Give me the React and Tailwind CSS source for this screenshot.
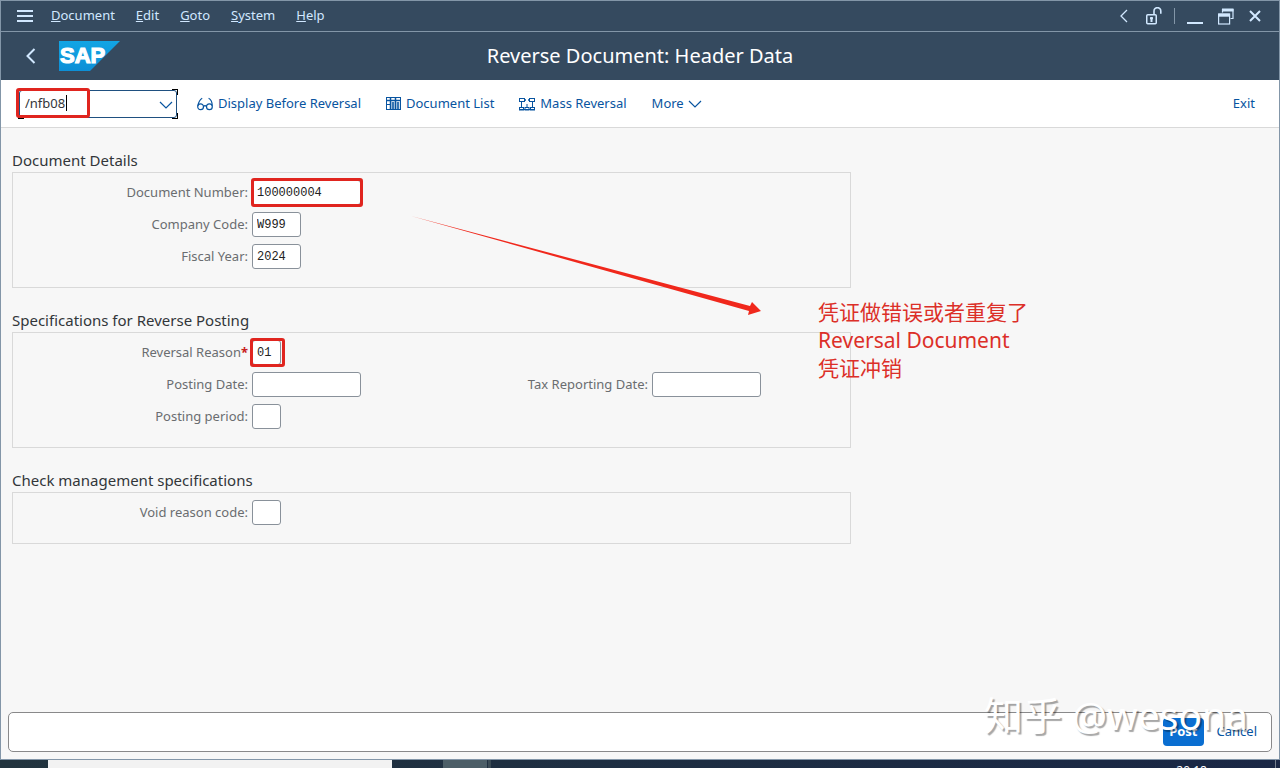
import { useState } from 'react';

const MENU_ITEMS = ['Document', 'Edit', 'Goto', 'System', 'Help'];

const MONO = "font-['Liberation_Mono',monospace]";

function SapLogo() {
  return (
    <svg width="62" height="30" viewBox="0 0 62 30" role="img" aria-label="SAP">
      <defs>
        <linearGradient id="sap-blue" x1="0" y1="0" x2="0" y2="1">
          <stop offset="0" stopColor="#12a5e4" />
          <stop offset="1" stopColor="#0d8fd6" />
        </linearGradient>
      </defs>
      <polygon points="0,0 61,0 31,30 0,30" fill="url(#sap-blue)" />
      <text
        x="1"
        y="22"
        fill="#fff"
        stroke="#fff"
        strokeWidth="1.200"
        fontFamily="Liberation Sans, sans-serif"
        fontWeight="700"
        fontSize="22"
      >
        SAP
      </text>
    </svg>
  );
}

function MenuIcon() {
  return (
    <svg width="16" height="14" viewBox="0 0 16 14" fill="#d1e8ff" aria-hidden="true">
      <rect y="1" width="16" height="2" />
      <rect y="6" width="16" height="2" />
      <rect y="11" width="16" height="2" />
    </svg>
  );
}

function CollapseIcon() {
  return (
    <svg width="8" height="14" viewBox="0 0 8 14" fill="none" stroke="#d1e8ff" strokeWidth="1.300" aria-hidden="true">
      <path d="M7 1L1 7l6 6" />
    </svg>
  );
}

function BackIcon() {
  return (
    <svg width="10" height="16" viewBox="0 0 10 16" fill="none" stroke="#d1e8ff" strokeWidth="2" aria-hidden="true">
      <path d="M8.500 1L1.500 8l7 7" />
    </svg>
  );
}

function UnlockIcon() {
  return (
    <svg width="16" height="18" viewBox="0 0 16 18" fill="none" stroke="#d1e8ff" aria-hidden="true">
      <rect x="0.75" y="7.75" width="9.5" height="9" rx="1" strokeWidth="1.5" />
      <path d="M8 7.5V4a3.4 3.4 0 0 1 6.8 0v2.8" strokeWidth="1.6" />
      <path d="M5.5 10v5M4 11.2h3" strokeWidth="2" />
    </svg>
  );
}

function RestoreIcon() {
  return (
    <svg width="16" height="17" viewBox="0 0 16 17" fill="none" stroke="#d1e8ff" aria-hidden="true">
      <path d="M4.5 4.5v-3h10.500v9h-2.500" strokeWidth="1.200" />
      <path d="M4 2h11.500" strokeWidth="3" />
      <rect x="0.6" y="6" width="11" height="10" strokeWidth="1.200" />
      <path d="M0.500 7.200h11.200" strokeWidth="3" />
    </svg>
  );
}

function CloseIcon() {
  return (
    <svg width="12" height="12" viewBox="0 0 12 12" stroke="#d1e8ff" strokeWidth="2" aria-hidden="true">
      <path d="M1 1l10 10M11 1L1 11" />
    </svg>
  );
}

function GlassesIcon() {
  return (
    <svg width="16" height="14" viewBox="0 0 16 14" fill="none" stroke="#0854a0" strokeWidth="1.200" aria-hidden="true">
      <circle cx="3.600" cy="9.800" r="2.900" />
      <circle cx="12.400" cy="9.800" r="2.900" />
      <path d="M6.500 9.500q1.500-1.600 3 0" />
      <path d="M0.800 8.800C1.500 5.500 2.800 2.500 5.200 1.200M15.200 8.800c0-4-.8-6.400-3.600-7.600" />
    </svg>
  );
}

function DocumentListIcon() {
  return (
    <svg width="15" height="15" viewBox="0 0 15 15" fill="none" stroke="#0854a0" aria-hidden="true">
      <rect x="0.500" y="1.500" width="14" height="12" />
      <path d="M0.500 4.500h14" strokeWidth="1.500" />
      <path d="M0.500 8.500h4" />
      <path d="M4.500 1v13M9.500 1v13" strokeWidth="1.500" />
      <path d="M7 6v7M12 6v7" strokeWidth="2.500" strokeOpacity="0.800" />
    </svg>
  );
}

function MassReversalIcon() {
  return (
    <svg width="16" height="14" viewBox="0 0 16 14" fill="none" stroke="#0854a0" aria-hidden="true">
      <rect x="0.500" y="1.500" width="5" height="3" />
      <rect x="10.500" y="1.500" width="5" height="3" />
      <path d="M5.500 3H7M9 3h1.500" strokeWidth="1.500" />
      <path d="M2.500 5v5M13.500 5v5M8 7v4M0.500 12.500h15" />
      <rect x="0.500" y="10.500" width="4" height="2.500" />
      <rect x="6" y="10.500" width="4" height="2.500" />
      <rect x="11.500" y="10.500" width="4" height="2.500" />
    </svg>
  );
}

function DownIcon() {
  return (
    <svg width="14" height="8" viewBox="0 0 14 8" fill="none" stroke="#0854a0" strokeWidth="1.200" aria-hidden="true">
      <path d="M1 1l6 6 6-6" />
    </svg>
  );
}

function ToolButton({ icon, children }) {
  return (
    <button type="button" className="flex items-center gap-[5px] whitespace-nowrap text-[#0854a0]">
      {icon}
      <span>{children}</span>
    </button>
  );
}

function RedFrame({ className }) {
  return (
    <span
      className={`pointer-events-none absolute rounded-[3px] border-3 border-[#e0251f] ${className}`}
      aria-hidden="true"
    />
  );
}

function Group({ title, children }) {
  return (
    <section>
      <h2 className="text-[15px] leading-6 text-[#32363a]">{title}</h2>
      <div className="flex flex-col gap-[7px] border border-[#d9d9d9] pt-[7px] pb-[18px]">{children}</div>
    </section>
  );
}

function Field({ id, label, value = '', required, frame, labelWidth = 'w-[235px]', width }) {
  const [text, setText] = useState(value);
  return (
    <div className="flex h-[25px] items-center gap-1">
      <label htmlFor={id} className={`${labelWidth} text-right whitespace-nowrap text-[#6a6d70]`}>
        {label}
        {required ? <span className="font-bold text-[#c8201c]">*</span> : ':'}
      </label>
      <span className="relative">
        <input
          id={id}
          value={text}
          onChange={(e) => setText(e.target.value)}
          className={`block h-[25px] rounded-[3px] border border-[#89919a] bg-white px-1 text-xs text-[#222] outline-none ${MONO} ${width}`}
        />
        {frame ? <RedFrame className={frame} /> : null}
      </span>
    </div>
  );
}

function CommandField() {
  const [command, setCommand] = useState('/nfb08');
  return (
    <div className="relative mr-5">
      <input
        aria-label="Command"
        value={command}
        onChange={(e) => setCommand(e.target.value)}
        className="block h-7 w-[158px] rounded-[3px] border border-[#1f5080] bg-white pr-6 pb-[2px] pl-[5px] text-[#32363a] outline-none"
      />
      <span className="absolute top-[5px] left-[47px] h-4 w-px bg-black" />
      <span className="absolute top-[11px] right-1">
        <DownIcon />
      </span>
      <span className="absolute -top-px -right-px h-1.5 w-1.5 border-t border-r border-black" />
      <span className="absolute -right-px -bottom-px h-1.5 w-1.5 border-r border-b border-black" />
      <span className="absolute -bottom-px -left-px h-1.5 w-1.5 border-b border-l border-black" />
      <RedFrame className="-top-[2px] -left-[3px] h-[30px] w-[74px]" />
    </div>
  );
}

export default function App() {
  return (
    <div className="flex min-h-screen flex-col bg-[#f7f7f7] font-['Noto_Sans','Noto_Sans_CJK_SC',sans-serif] text-[13px]">
      <div className="relative flex flex-1 flex-col border border-[#8396a8]">
        <nav className="flex h-[31px] items-center border-b border-[#8396a8] bg-[#354a5f] pr-[18px] pl-4 text-[#d1e8ff]">
          <button type="button" aria-label="Menu" className="mr-[18px]">
            <MenuIcon />
          </button>
          <div className="flex gap-[21px]">
            {MENU_ITEMS.map((item) => (
              <button key={item} type="button">
                <span className="underline">{item[0]}</span>
                {item.slice(1)}
              </button>
            ))}
          </div>
          <div className="ml-auto flex items-center">
            <button type="button" aria-label="Collapse" className="mr-[18px]">
              <CollapseIcon />
            </button>
            <button type="button" aria-label="Unlock">
              <UnlockIcon />
            </button>
            <span className="mx-3 h-4 w-px bg-[#8396a8]" />
            <button type="button" aria-label="Minimize" className="flex h-4 w-4 items-end">
              <span className="h-0.5 w-4 bg-[#d1e8ff]" />
            </button>
            <button type="button" aria-label="Restore" className="mx-[15px]">
              <RestoreIcon />
            </button>
            <button type="button" aria-label="Close">
              <CloseIcon />
            </button>
          </div>
        </nav>

        <header className="grid h-12 grid-cols-[1fr_auto_1fr] items-center bg-[#354a5f]">
          <div className="flex items-center gap-[23px] pl-[25px]">
            <button type="button" aria-label="Back">
              <BackIcon />
            </button>
            <SapLogo />
          </div>
          <h1 className="text-xl text-white">Reverse Document: Header Data</h1>
        </header>

        <div className="flex h-12 items-center border-b border-[#d9d9d9] bg-white pr-6 pl-[18px]">
          <CommandField />
          <div className="flex gap-[25px]">
            <ToolButton icon={<GlassesIcon />}>Display Before Reversal</ToolButton>
            <ToolButton icon={<DocumentListIcon />}>Document List</ToolButton>
            <ToolButton icon={<MassReversalIcon />}>Mass Reversal</ToolButton>
            <button type="button" className="flex items-center gap-1 text-[#0854a0]">
              More
              <DownIcon />
            </button>
          </div>
          <button type="button" className="ml-auto text-[#0854a0]">
            Exit
          </button>
        </div>

        <main className="relative flex-1 px-[11px] pt-5">
          <form className="flex max-w-[839px] flex-col gap-5" onSubmit={(e) => e.preventDefault()}>
            <Group title="Document Details">
              <Field
                id="document-number"
                label="Document Number"
                value="100000004"
                width="w-[109px]"
                frame="-top-0.5 -right-0.5 -bottom-0.5 -left-px"
              />
              <Field id="company-code" label="Company Code" value="W999" width="w-[49px]" />
              <Field id="fiscal-year" label="Fiscal Year" value="2024" width="w-[49px]" />
            </Group>
            <Group title="Specifications for Reverse Posting">
              <Field
                id="reversal-reason"
                label="Reversal Reason"
                value="01"
                required
                width="w-[29px]"
                frame="-top-0.5 -right-1 -bottom-0.5 -left-0.5"
              />
              <div className="flex">
                <Field id="posting-date" label="Posting Date" width="w-[109px]" />
                <Field
                  id="tax-reporting-date"
                  label="Tax Reporting Date"
                  labelWidth="w-[287px]"
                  width="w-[109px]"
                />
              </div>
              <Field id="posting-period" label="Posting period" width="w-[29px]" />
            </Group>
            <Group title="Check management specifications">
              <Field id="void-reason" label="Void reason code" width="w-[29px]" />
            </Group>
          </form>

          <svg
            className="pointer-events-none absolute top-[88px] left-[410px]"
            width="352"
            height="102"
            viewBox="0 0 352 102"
            fill="#f0281c"
            aria-hidden="true"
          >
            <polygon points="0,0 339,90 341,86 350,95 337,99 338,95" />
          </svg>
          <p className="absolute top-[170px] left-[817px] text-[21px] leading-7 text-[#dc2f28]">
            凭证做错误或者重复了
            <br />
            Reversal Document
            <br />
            凭证冲销
          </p>
        </main>

        <footer className="mx-[7px] mb-[7px] flex h-10 items-center justify-end gap-[13px] rounded-[5px] border border-[#89898a] bg-white pr-[14px]">
          <button type="button" className="h-7 rounded-[4px] bg-[#0a6ed1] px-1.5 font-bold text-white">
            Post
          </button>
          <button type="button" className="text-[#0854a0]">
            Cancel
          </button>
        </footer>

        <div className="pointer-events-none absolute right-[31px] bottom-[20px] text-[39px] leading-[48px] whitespace-nowrap text-white [text-shadow:2px_2px_1px_rgba(0,0,0,0.35)]">
          知乎 @wesona
        </div>
      </div>

      <div className="flex h-2 overflow-hidden bg-linear-to-r from-[#22343e] to-[#1a2745]">
        <div className="ml-12 h-full w-[344px] bg-[#f2f2f2]" />
        <div className="ml-[51px] h-full w-11 bg-[#4c5e67]" />
        <div className="ml-px h-full w-[3px] bg-[#3a4a54]" />
        <time className="mr-[68px] ml-auto pt-[3px] text-xs leading-4 text-white">20:18</time>
        <div className="mr-1 h-full w-px bg-[#76808f]" />
      </div>
    </div>
  );
}
